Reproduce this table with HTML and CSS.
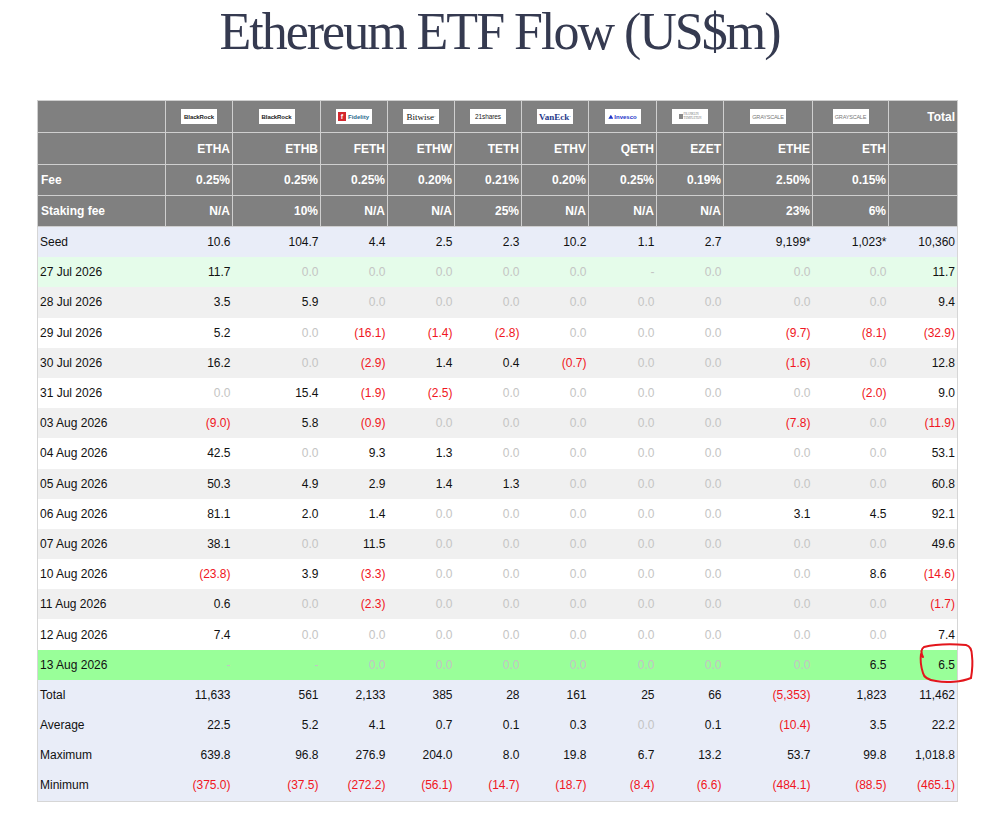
FILE: index.html
```html
<!DOCTYPE html>
<html>
<head>
<meta charset="utf-8">
<link rel="stylesheet" href="styles.css">
</head>
<body>
<div class="page">
  <h1 class="title">Ethereum ETF Flow (US$m)</h1>
  <table class="flow">
    <colgroup>
      <col class="c-date"><col class="c-67"><col class="c-88"><col class="c-67"><col class="c-67"><col class="c-67"><col class="c-67"><col class="c-68"><col class="c-67"><col class="c-89"><col class="c-76"><col class="c-69">
    </colgroup>
    <thead>
      <tr class="h-logo">
        <th></th>
        <th class="lg"><span class="logo blackrock">BlackRock</span></th>
        <th class="lg"><span class="logo blackrock">BlackRock</span></th>
        <th class="lg"><span class="logo fidelity"><span class="fid-box">f</span><span class="fid-txt">Fidelity</span></span></th>
        <th class="lg"><span class="logo bitwise">Bitwise<sup>·</sup></span></th>
        <th class="lg"><span class="logo shares">21shares</span></th>
        <th class="lg"><span class="logo vaneck">VanEck<sup>·</sup></span></th>
        <th class="lg"><span class="logo invesco"><span class="inv-ico"></span>Invesco</span></th>
        <th class="lg"><span class="logo franklin"><span class="fr-ico"></span><span class="fr-txt">FRANKLIN<br>TEMPLETON</span></span></th>
        <th class="lg"><span class="logo grayscale">GRAYSCALE</span></th>
        <th class="lg"><span class="logo grayscale">GRAYSCALE</span></th>
        <th class="tot">Total</th>
      </tr>
      <tr class="h-tick">
        <th></th><th>ETHA</th><th>ETHB</th><th>FETH</th><th>ETHW</th><th>TETH</th><th>ETHV</th><th>QETH</th><th>EZET</th><th>ETHE</th><th>ETH</th><th></th>
      </tr>
      <tr class="h-fee">
        <th class="lbl">Fee</th><th>0.25%</th><th>0.25%</th><th>0.25%</th><th>0.20%</th><th>0.21%</th><th>0.20%</th><th>0.25%</th><th>0.19%</th><th>2.50%</th><th>0.15%</th><th></th>
      </tr>
      <tr class="h-fee">
        <th class="lbl">Staking fee</th><th>N/A</th><th>10%</th><th>N/A</th><th>N/A</th><th>25%</th><th>N/A</th><th>N/A</th><th>N/A</th><th>23%</th><th>6%</th><th></th>
      </tr>
    </thead>
    <tbody>
      <tr class="r-sum">
        <td>Seed</td><td>10.6</td><td>104.7</td><td>4.4</td><td>2.5</td><td>2.3</td><td>10.2</td><td>1.1</td><td>2.7</td><td>9,199*</td><td>1,023*</td><td>10,360</td>
      </tr>
      <tr class="r-new">
        <td>27 Jul 2026</td><td>11.7</td><td class="z">0.0</td><td class="z">0.0</td><td class="z">0.0</td><td class="z">0.0</td><td class="z">0.0</td><td class="z">-</td><td class="z">0.0</td><td class="z">0.0</td><td class="z">0.0</td><td>11.7</td>
      </tr>
      <tr class="r-gray">
        <td>28 Jul 2026</td><td>3.5</td><td>5.9</td><td class="z">0.0</td><td class="z">0.0</td><td class="z">0.0</td><td class="z">0.0</td><td class="z">0.0</td><td class="z">0.0</td><td class="z">0.0</td><td class="z">0.0</td><td>9.4</td>
      </tr>
      <tr class="r-white">
        <td>29 Jul 2026</td><td>5.2</td><td class="z">0.0</td><td class="n">(16.1)</td><td class="n">(1.4)</td><td class="n">(2.8)</td><td class="z">0.0</td><td class="z">0.0</td><td class="z">0.0</td><td class="n">(9.7)</td><td class="n">(8.1)</td><td class="n">(32.9)</td>
      </tr>
      <tr class="r-gray">
        <td>30 Jul 2026</td><td>16.2</td><td class="z">0.0</td><td class="n">(2.9)</td><td>1.4</td><td>0.4</td><td class="n">(0.7)</td><td class="z">0.0</td><td class="z">0.0</td><td class="n">(1.6)</td><td class="z">0.0</td><td>12.8</td>
      </tr>
      <tr class="r-white">
        <td>31 Jul 2026</td><td class="z">0.0</td><td>15.4</td><td class="n">(1.9)</td><td class="n">(2.5)</td><td class="z">0.0</td><td class="z">0.0</td><td class="z">0.0</td><td class="z">0.0</td><td class="z">0.0</td><td class="n">(2.0)</td><td>9.0</td>
      </tr>
      <tr class="r-gray">
        <td>03 Aug 2026</td><td class="n">(9.0)</td><td>5.8</td><td class="n">(0.9)</td><td class="z">0.0</td><td class="z">0.0</td><td class="z">0.0</td><td class="z">0.0</td><td class="z">0.0</td><td class="n">(7.8)</td><td class="z">0.0</td><td class="n">(11.9)</td>
      </tr>
      <tr class="r-white">
        <td>04 Aug 2026</td><td>42.5</td><td class="z">0.0</td><td>9.3</td><td>1.3</td><td class="z">0.0</td><td class="z">0.0</td><td class="z">0.0</td><td class="z">0.0</td><td class="z">0.0</td><td class="z">0.0</td><td>53.1</td>
      </tr>
      <tr class="r-gray">
        <td>05 Aug 2026</td><td>50.3</td><td>4.9</td><td>2.9</td><td>1.4</td><td>1.3</td><td class="z">0.0</td><td class="z">0.0</td><td class="z">0.0</td><td class="z">0.0</td><td class="z">0.0</td><td>60.8</td>
      </tr>
      <tr class="r-white">
        <td>06 Aug 2026</td><td>81.1</td><td>2.0</td><td>1.4</td><td class="z">0.0</td><td class="z">0.0</td><td class="z">0.0</td><td class="z">0.0</td><td class="z">0.0</td><td>3.1</td><td>4.5</td><td>92.1</td>
      </tr>
      <tr class="r-gray">
        <td>07 Aug 2026</td><td>38.1</td><td class="z">0.0</td><td>11.5</td><td class="z">0.0</td><td class="z">0.0</td><td class="z">0.0</td><td class="z">0.0</td><td class="z">0.0</td><td class="z">0.0</td><td class="z">0.0</td><td>49.6</td>
      </tr>
      <tr class="r-white">
        <td>10 Aug 2026</td><td class="n">(23.8)</td><td>3.9</td><td class="n">(3.3)</td><td class="z">0.0</td><td class="z">0.0</td><td class="z">0.0</td><td class="z">0.0</td><td class="z">0.0</td><td class="z">0.0</td><td>8.6</td><td class="n">(14.6)</td>
      </tr>
      <tr class="r-gray">
        <td>11 Aug 2026</td><td>0.6</td><td class="z">0.0</td><td class="n">(2.3)</td><td class="z">0.0</td><td class="z">0.0</td><td class="z">0.0</td><td class="z">0.0</td><td class="z">0.0</td><td class="z">0.0</td><td class="z">0.0</td><td class="n">(1.7)</td>
      </tr>
      <tr class="r-white">
        <td>12 Aug 2026</td><td>7.4</td><td class="z">0.0</td><td class="z">0.0</td><td class="z">0.0</td><td class="z">0.0</td><td class="z">0.0</td><td class="z">0.0</td><td class="z">0.0</td><td class="z">0.0</td><td class="z">0.0</td><td>7.4</td>
      </tr>
      <tr class="r-today">
        <td>13 Aug 2026</td><td class="z">-</td><td class="z">-</td><td class="z">0.0</td><td class="z">0.0</td><td class="z">0.0</td><td class="z">0.0</td><td class="z">0.0</td><td class="z">0.0</td><td class="z">0.0</td><td>6.5</td><td>6.5</td>
      </tr>
      <tr class="r-sum">
        <td>Total</td><td>11,633</td><td>561</td><td>2,133</td><td>385</td><td>28</td><td>161</td><td>25</td><td>66</td><td class="n">(5,353)</td><td>1,823</td><td>11,462</td>
      </tr>
      <tr class="r-sum">
        <td>Average</td><td>22.5</td><td>5.2</td><td>4.1</td><td>0.7</td><td>0.1</td><td>0.3</td><td class="z">0.0</td><td>0.1</td><td class="n">(10.4)</td><td>3.5</td><td>22.2</td>
      </tr>
      <tr class="r-sum">
        <td>Maximum</td><td>639.8</td><td>96.8</td><td>276.9</td><td>204.0</td><td>8.0</td><td>19.8</td><td>6.7</td><td>13.2</td><td>53.7</td><td>99.8</td><td>1,018.8</td>
      </tr>
      <tr class="r-sum">
        <td>Minimum</td><td class="n">(375.0)</td><td class="n">(37.5)</td><td class="n">(272.2)</td><td class="n">(56.1)</td><td class="n">(14.7)</td><td class="n">(18.7)</td><td class="n">(8.4)</td><td class="n">(6.6)</td><td class="n">(484.1)</td><td class="n">(88.5)</td><td class="n">(465.1)</td>
      </tr>
    </tbody>
  </table>
  <svg class="mark" width="70" height="50" viewBox="0 0 70 50">
    <path d="M14 17 C12 13 12 9 15 7 C27 4 44 4 57 5 C61 6 63 10 63 16 C64 24 63 32 62 38 C53 42 37 43 27 41 C19 40 15 38 14 33 C12 27 11 21 12 14" fill="none" stroke="#e3161c" stroke-width="2" stroke-linecap="round"/>
  </svg>
</div>
</body>
</html>
```

FILE: styles.css
```css
html, body {
  margin: 0;
  padding: 0;
  background: #ffffff;
}

.page {
  position: relative;
  width: 999px;
  font-family: "Liberation Sans", Arial, sans-serif;
}

.title {
  margin: 2px 0 0 0;
  height: 60px;
  line-height: 60px;
  font-family: "Liberation Serif", "Times New Roman", serif;
  font-weight: normal;
  font-size: 52px;
  letter-spacing: -2px;
  color: #353a50;
  text-align: center;
}

.flow {
  margin: 38px 0 0 37px;
  width: 920px;
  table-layout: fixed;
  border-collapse: collapse;
  border: 1px solid #d6d6d6;
  font-size: 12px;
  color: #111;
}

.c-date { width: 128px; }
.c-67 { width: 67px; }
.c-68 { width: 68px; }
.c-69 { width: 69px; }
.c-76 { width: 76px; }
.c-88 { width: 88px; }
.c-89 { width: 89px; }

.flow th {
  background: #808080;
  color: #ffffff;
  font-weight: bold;
  text-align: right;
  padding: 0 2px;
  border: 1px solid #cfcfcf;
  white-space: nowrap;
}

.flow th.lbl { text-align: left; padding-left: 3px; }
.flow th.lg { text-align: center; padding: 0; }
.flow th.tot { vertical-align: middle; }

.h-logo { height: 32px; }
.h-tick { height: 32px; }
.h-fee { height: 31px; }

.flow td {
  height: 30.2px;
  padding: 0 2px 0 0;
  text-align: right;
  white-space: nowrap;
}
.flow td:first-child {
  text-align: left;
  padding-left: 2px;
}
.flow td.z { color: #c4c4c4; }
.flow td.n { color: #f01622; }

.r-sum { background: #e9edf8; }
.r-new { background: #e5fcea; }
.r-gray { background: #f0f0f0; }
.r-white { background: #ffffff; }
.r-today { background: #99ff99; }

/* logos */
.logo {
  display: inline-flex;
  align-items: center;
  justify-content: center;
  width: 36px;
  height: 15px;
  background: #ffffff;
  vertical-align: middle;
  font-weight: normal;
  white-space: nowrap;
  overflow: hidden;
}
.blackrock {
  font-family: "Liberation Sans", Arial, sans-serif;
  font-weight: bold;
  font-size: 6px;
  color: #222;
  letter-spacing: -0.1px;
}
.fidelity { justify-content: flex-start; padding-left: 2px; box-sizing: border-box; gap: 2px; }
.fid-box {
  display: inline-block;
  width: 8px;
  height: 9px;
  background: #d3272e;
  color: #fff;
  font-size: 7px;
  font-weight: bold;
  line-height: 9px;
  text-align: center;
  font-family: "Liberation Sans", Arial, sans-serif;
}
.fid-txt {
  font-size: 6px;
  font-weight: bold;
  color: #2a6a8c;
  font-family: "Liberation Sans", Arial, sans-serif;
}
.bitwise {
  font-family: "Liberation Serif", "Times New Roman", serif;
  font-size: 9px;
  color: #111;
}
.bitwise sup, .vaneck sup { font-size: 5px; vertical-align: top; }
.shares {
  font-family: "Liberation Sans", Arial, sans-serif;
  font-size: 6.5px;
  color: #222;
  letter-spacing: -0.1px;
}
.vaneck {
  font-family: "Liberation Serif", "Times New Roman", serif;
  font-weight: bold;
  font-size: 9px;
  color: #1f3a8a;
}
.invesco {
  font-family: "Liberation Sans", Arial, sans-serif;
  font-size: 6px;
  font-weight: bold;
  color: #1b35c9;
  gap: 1px;
}
.inv-ico {
  display: inline-block;
  width: 5px;
  height: 4px;
  background: #1b35c9;
  clip-path: polygon(0 100%, 50% 0, 100% 100%);
}
.franklin { gap: 1px; }
.fr-ico {
  display: inline-block;
  width: 4px;
  height: 5px;
  background: #888;
}
.fr-txt {
  font-family: "Liberation Serif", "Times New Roman", serif;
  font-size: 3px;
  line-height: 3.5px;
  color: #777;
  text-align: left;
}
.grayscale {
  font-family: "Liberation Sans", Arial, sans-serif;
  font-size: 5.5px;
  color: #777;
  letter-spacing: -0.2px;
}

.mark {
  position: absolute;
  left: 909px;
  top: 638px;
}
```
